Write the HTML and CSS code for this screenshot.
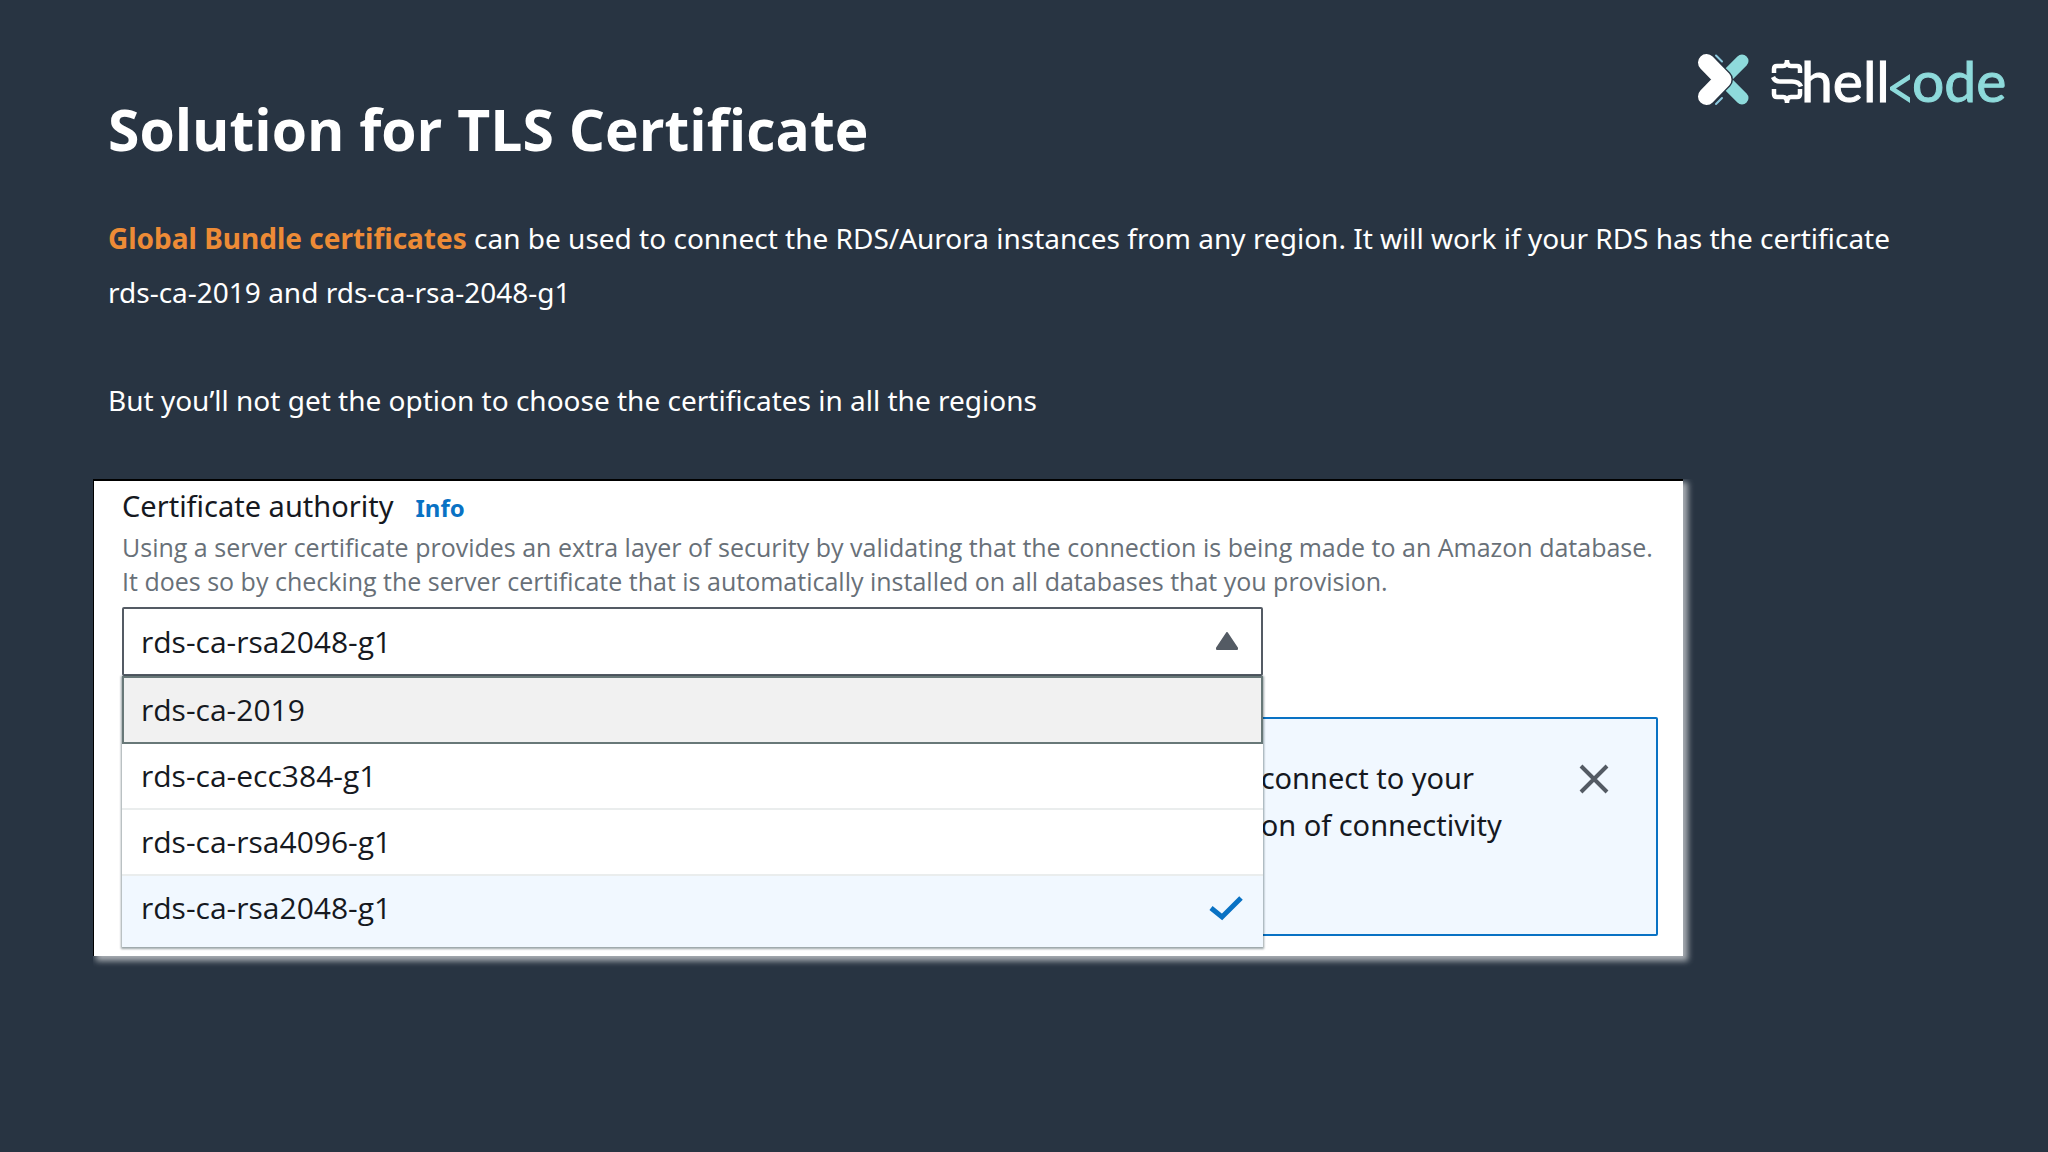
FILE: index.html
```html
<!DOCTYPE html>
<html lang="en">
<head>
  <meta charset="utf-8">
  <meta name="viewport" content="width=device-width, initial-scale=1">
  <title>Solution for TLS Certificate</title>
  <link rel="stylesheet" href="styles.css">
</head>
<body>
  <header class="header">
    <h1 class="title">Solution for TLS Certificate</h1>
    <svg class="logo" viewBox="0 -8 316 76" role="img" aria-label="Shellkode">
      <g fill="none" stroke-linecap="round" stroke-linejoin="round">
        <path d="M46 11 27 30M46 48 27 29" stroke="#8edadb" stroke-width="13"/>
        <path d="M10 12.500 27 29.500 10 46.500" stroke="#283442" stroke-width="20"/>
        <path d="M20 5.500 26 11.500M26 48 20 54" stroke="#8cc9df" stroke-width="2"/>
        <path d="M10.500 12.500 27 29.500 10.500 46.500" stroke="#fff" stroke-width="17"/>
      </g>
      <g fill="none" stroke="#fff" stroke-width="4.500">
        <path d="M78 23V19Q78 16 81 16H87Q91 16 91 10Q91 16 95 16H101Q104 16 104 19V23"/>
        <path d="M77 27Q79 31.500 84 31.500H96Q103 31.500 105 36.500"/>
        <path d="M78 39V44Q78 47 81 47H87Q91 47 91 53Q91 47 95 47H101Q104 47 104 44V39"/>
      </g>
      <text class="logo-text light" x="105" y="52">hell</text>
      <path d="M214 24V29.500L200 38.500 214 47.500V53L194 40V37Z" fill="#8edadb"/>
      <text class="logo-text teal" x="216" y="52">ode</text>
    </svg>
  </header>

  <main class="main">
    <div class="copy">
      <p><strong class="accent">Global Bundle certificates</strong> can be used to connect the RDS/Aurora instances from any region. It will work if your RDS has the certificate rds-ca-2019 and rds-ca-rsa-2048-g1</p>
      <p>But you’ll not get the option to choose the certificates in all the regions</p>
    </div>

    <section class="card">
      <div class="label-row">
        <label for="ca">Certificate authority</label>
        <a class="info" href="#info">Info</a>
      </div>
      <p class="hint" id="ca-hint">Using a server certificate provides an extra layer of security by validating that the connection is being made to an Amazon database. It does so by checking the server certificate that is automatically installed on all databases that you provision.</p>

      <div class="picker">
        <select class="select" id="ca" aria-describedby="ca-hint">
          <option>rds-ca-rsa2048-g1</option>
        </select>
        <svg class="arrow" viewBox="0 0 22 18" aria-hidden="true"><path d="M11 1 21 16V17H1V16Z" fill="#545b64" stroke="#545b64" stroke-width="2" stroke-linejoin="round"/></svg>
        <ul class="menu" role="listbox" aria-label="Certificate authority">
          <li class="option active" role="option" aria-selected="false">rds-ca-2019</li>
          <li class="option" role="option" aria-selected="false">rds-ca-ecc384-g1</li>
          <li class="option" role="option" aria-selected="false">rds-ca-rsa4096-g1</li>
          <li class="option selected" role="option" aria-selected="true">rds-ca-rsa2048-g1
            <svg class="check" viewBox="0 0 34 26" aria-hidden="true"><path d="M2 13 13 22 32 3" fill="none" stroke="#0972c4" stroke-width="5"/></svg>
          </li>
        </ul>
      </div>

      <aside class="alert">
        <p>connect to your<br>on of connectivity</p>
        <button class="close" type="button" aria-label="Dismiss">
          <svg viewBox="0 0 30 30" aria-hidden="true"><path d="M2 2 28 28M28 2 2 28" stroke="#545b64" stroke-width="4"/></svg>
        </button>
      </aside>
    </section>
  </main>
</body>
</html>
```
FILE: styles.css
```css
* {
  box-sizing: border-box;
}

body {
  margin: 0;
  min-height: 100vh;
  background: #283442;
  color: #fff;
  font-family: "Noto Sans", "Open Sans", sans-serif;
}

p {
  margin: 0;
}

.header {
  display: flex;
  justify-content: space-between;
  align-items: flex-start;
  padding: 42px 36px 0 108px;
}

.title {
  margin: 48px 0 0;
  font: 700 57px/78px "Open Sans", "Noto Sans", sans-serif;
}

.logo {
  flex: none;
  width: 316px;
  height: 76px;
}

.logo-text {
  font: 400 57px Lato, sans-serif;
  stroke-width: 1px;
}

.light {
  fill: #fff;
  stroke: #fff;
}

.teal {
  fill: #8edadb;
  stroke: #8edadb;
}

.main {
  padding: 43px 93px 60px;
}

.copy {
  display: grid;
  gap: 54px;
  padding: 0 15px;
  font-size: 28px;
  line-height: 54px;
}

.accent {
  color: #ed8b36;
}

.card {
  max-width: 1590px;
  margin-top: 52px;
  padding: 5px 25px 20px 28px;
  border-top: 2px solid #000;
  border-left: 1px solid #000;
  background: #fff;
  color: #16191f;
  box-shadow: 4px 4px 6px 1px rgba(255, 255, 255, 0.6);
  clip-path: inset(0 -16px -16px 0);
}

.label-row {
  display: flex;
  align-items: baseline;
  gap: 22px;
  font-size: 29px;
  line-height: 40px;
}

.info {
  color: #0972c4;
  font-size: 24px;
  font-weight: 700;
  text-decoration: none;
}

.hint {
  margin: 2px 0 9px;
  color: #687078;
  font: 25px/34px "Open Sans", "Noto Sans", sans-serif;
}

.picker {
  position: relative;
  width: 74.3%;
  font: 30px/64px "Open Sans", "Noto Sans", sans-serif;
}

.select {
  display: block;
  width: 100%;
  height: 69px;
  padding: 0 17px;
  border: 2px solid #545b64;
  border-radius: 2px;
  background: #fff;
  color: inherit;
  font: inherit;
  appearance: none;
}

.arrow {
  position: absolute;
  top: 25px;
  right: 25px;
  width: 22px;
  height: 18px;
}

.menu {
  position: absolute;
  z-index: 1;
  top: 100%;
  left: 0;
  width: 100%;
  margin: 0;
  padding: 0;
  background: #fff;
  list-style: none;
  box-shadow: 0 1px 2px 1px rgba(0, 28, 36, 0.4);
}

.option {
  display: flex;
  justify-content: space-between;
  align-items: center;
  padding: 0 20px 0 19px;
  border-top: 2px solid #eaeded;
}

.active {
  padding: 0 18px 0 17px;
  border: 2px solid #687878;
  background: #f1f1f1;
}

.active + .option {
  border-top: 0;
}

.selected {
  padding-bottom: 7px;
  background: #f1f8ff;
}

.check {
  width: 34px;
  height: 26px;
}

.alert {
  display: flex;
  justify-content: space-between;
  align-items: flex-start;
  min-height: 219px;
  margin-top: 41px;
  padding: 35px 47px 35px 74%;
  border: 2px solid #0972c4;
  border-radius: 2px;
  background: #f1f8ff;
  font-size: 29px;
  line-height: 47px;
}

.close {
  display: flex;
  margin-top: 10px;
  padding: 0;
  border: 0;
  background: none;
}

.close svg {
  width: 30px;
  height: 30px;
}
```
